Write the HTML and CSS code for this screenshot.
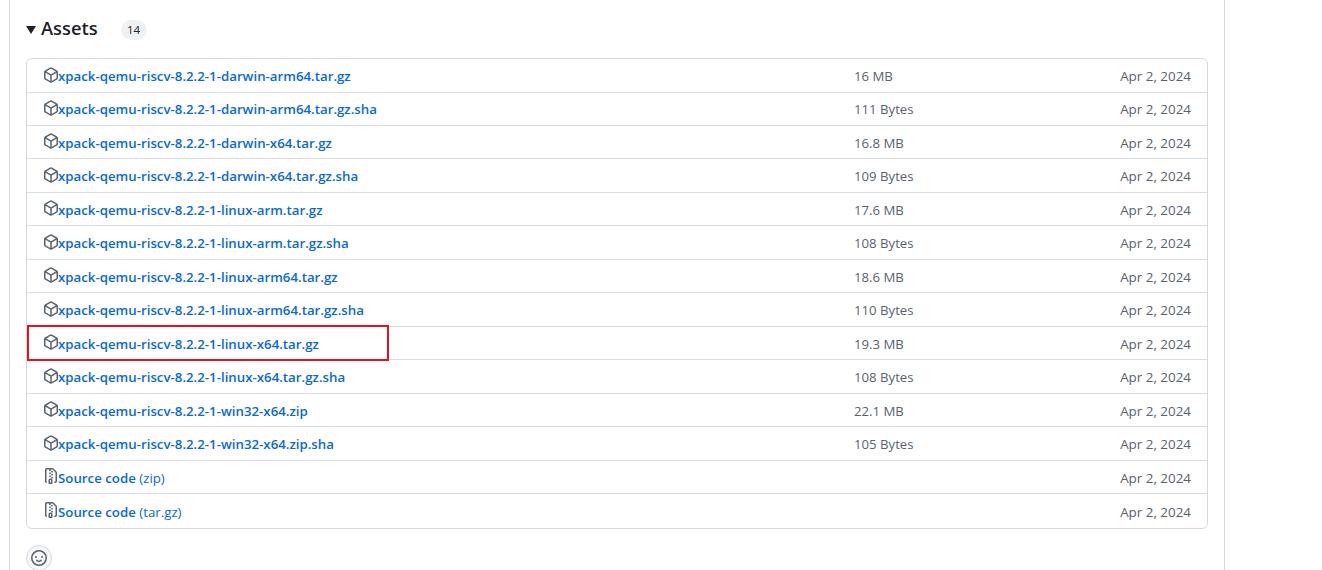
FILE: index.html
```html
<!DOCTYPE html>
<html lang="en">
<head>
<meta charset="utf-8">
<title>Assets</title>
<link rel="stylesheet" href="styles.css">
</head>
<body>
<main class="release">
  <div class="assets-head">
    <span class="caret"></span>
    <h3 class="assets-title">Assets</h3>
    <span class="counter">14</span>
  </div>
  <ul class="assets">
    <li class="row"><span class="name"><svg class="icon" viewBox="0 0 16 16"><use href="#pkg"/></svg><a>xpack-qemu-riscv-8.2.2-1-darwin-arm64.tar.gz</a></span><span class="size">16 MB</span><span class="date">Apr 2, 2024</span></li>
    <li class="row"><span class="name"><svg class="icon" viewBox="0 0 16 16"><use href="#pkg"/></svg><a>xpack-qemu-riscv-8.2.2-1-darwin-arm64.tar.gz.sha</a></span><span class="size">111 Bytes</span><span class="date">Apr 2, 2024</span></li>
    <li class="row"><span class="name"><svg class="icon" viewBox="0 0 16 16"><use href="#pkg"/></svg><a>xpack-qemu-riscv-8.2.2-1-darwin-x64.tar.gz</a></span><span class="size">16.8 MB</span><span class="date">Apr 2, 2024</span></li>
    <li class="row"><span class="name"><svg class="icon" viewBox="0 0 16 16"><use href="#pkg"/></svg><a>xpack-qemu-riscv-8.2.2-1-darwin-x64.tar.gz.sha</a></span><span class="size">109 Bytes</span><span class="date">Apr 2, 2024</span></li>
    <li class="row"><span class="name"><svg class="icon" viewBox="0 0 16 16"><use href="#pkg"/></svg><a>xpack-qemu-riscv-8.2.2-1-linux-arm.tar.gz</a></span><span class="size">17.6 MB</span><span class="date">Apr 2, 2024</span></li>
    <li class="row"><span class="name"><svg class="icon" viewBox="0 0 16 16"><use href="#pkg"/></svg><a>xpack-qemu-riscv-8.2.2-1-linux-arm.tar.gz.sha</a></span><span class="size">108 Bytes</span><span class="date">Apr 2, 2024</span></li>
    <li class="row"><span class="name"><svg class="icon" viewBox="0 0 16 16"><use href="#pkg"/></svg><a>xpack-qemu-riscv-8.2.2-1-linux-arm64.tar.gz</a></span><span class="size">18.6 MB</span><span class="date">Apr 2, 2024</span></li>
    <li class="row"><span class="name"><svg class="icon" viewBox="0 0 16 16"><use href="#pkg"/></svg><a>xpack-qemu-riscv-8.2.2-1-linux-arm64.tar.gz.sha</a></span><span class="size">110 Bytes</span><span class="date">Apr 2, 2024</span></li>
    <li class="row"><span class="highlight"></span><span class="name"><svg class="icon" viewBox="0 0 16 16"><use href="#pkg"/></svg><a>xpack-qemu-riscv-8.2.2-1-linux-x64.tar.gz</a></span><span class="size">19.3 MB</span><span class="date">Apr 2, 2024</span></li>
    <li class="row"><span class="name"><svg class="icon" viewBox="0 0 16 16"><use href="#pkg"/></svg><a>xpack-qemu-riscv-8.2.2-1-linux-x64.tar.gz.sha</a></span><span class="size">108 Bytes</span><span class="date">Apr 2, 2024</span></li>
    <li class="row"><span class="name"><svg class="icon" viewBox="0 0 16 16"><use href="#pkg"/></svg><a>xpack-qemu-riscv-8.2.2-1-win32-x64.zip</a></span><span class="size">22.1 MB</span><span class="date">Apr 2, 2024</span></li>
    <li class="row"><span class="name"><svg class="icon" viewBox="0 0 16 16"><use href="#pkg"/></svg><a>xpack-qemu-riscv-8.2.2-1-win32-x64.zip.sha</a></span><span class="size">105 Bytes</span><span class="date">Apr 2, 2024</span></li>
    <li class="row"><span class="name"><svg class="icon" viewBox="0 0 16 16"><use href="#zip"/></svg><a>Source code <span class="ext">(zip)</span></a></span><span class="size"></span><span class="date">Apr 2, 2024</span></li>
    <li class="row"><span class="name"><svg class="icon" viewBox="0 0 16 16"><use href="#zip"/></svg><a>Source code <span class="ext">(tar.gz)</span></a></span><span class="size"></span><span class="date">Apr 2, 2024</span></li>
  </ul>
  <button class="reaction" type="button" aria-label="Add reaction"><svg class="smiley" viewBox="0 0 16 16"><path d="M8 0a8 8 0 1 1 0 16A8 8 0 0 1 8 0ZM1.5 8a6.5 6.5 0 1 0 13 0 6.5 6.5 0 0 0-13 0Zm3.82 1.636a.75.75 0 0 1 1.038.175l.007.009c.103.118.22.222.35.31.264.178.683.37 1.285.37.602 0 1.02-.192 1.285-.371.13-.088.247-.192.35-.31l.007-.008a.75.75 0 0 1 1.222.87l-.022-.015c.02.013.021.015.021.015v.001l-.001.002-.002.003-.005.007-.014.019a2.066 2.066 0 0 1-.184.213c-.16.166-.338.316-.53.445-.63.418-1.37.638-2.127.629-.946 0-1.652-.308-2.126-.63a3.331 3.331 0 0 1-.715-.657l-.014-.02-.005-.006-.002-.003v-.002h-.001l.613-.432-.614.43a.75.75 0 0 1 .183-1.044ZM12 7a1 1 0 1 1-2 0 1 1 0 0 1 2 0ZM5 8a1 1 0 1 1 0-2 1 1 0 0 1 0 2Z"/></svg></button>
</main>
<svg class="defs" aria-hidden="true">
  <symbol id="pkg" viewBox="0 0 16 16"><path d="m8.878.392 5.25 3.045c.54.314.872.89.872 1.514v6.098a1.75 1.75 0 0 1-.872 1.514l-5.25 3.045a1.75 1.75 0 0 1-1.756 0l-5.25-3.045A1.75 1.75 0 0 1 1 11.049V4.951c0-.624.332-1.201.872-1.514L7.122.392a1.75 1.75 0 0 1 1.756 0ZM7.875 1.69l-4.63 2.685L8 7.133l4.755-2.758-4.63-2.685a.248.248 0 0 0-.25 0ZM2.5 5.677v5.372c0 .09.047.171.125.216l4.625 2.683V8.432Zm6.25 8.271 4.625-2.683a.25.25 0 0 0 .125-.216V5.677L8.75 8.432Z"/></symbol>
  <symbol id="zip" viewBox="0 0 16 16"><path d="M3.5 1.75v11.5c0 .09.048.173.126.217a.75.75 0 0 1-.752 1.298A1.748 1.748 0 0 1 2 13.25V1.75C2 .784 2.784 0 3.75 0h5.586c.464 0 .909.185 1.237.513l2.914 2.914c.329.328.513.773.513 1.237v8.586A1.75 1.75 0 0 1 12.25 15h-.5a.75.75 0 0 1 0-1.5h.5a.25.25 0 0 0 .25-.25V4.664a.25.25 0 0 0-.073-.177L9.513 1.573a.25.25 0 0 0-.177-.073H7.25a.75.75 0 0 1 0 1.5h-.5a.75.75 0 0 1 0-1.5h-3a.25.25 0 0 0-.25.25Zm3.75 8.75h.5c.966 0 1.75.784 1.75 1.75v3a.75.75 0 0 1-.75.75h-2.5a.75.75 0 0 1-.75-.75v-3c0-.966.784-1.75 1.75-1.75ZM6 5.25a.75.75 0 0 1 .75-.75h.5a.75.75 0 0 1 0 1.5h-.5A.75.75 0 0 1 6 5.25Zm.75 2.25h.5a.75.75 0 0 1 0 1.5h-.5a.75.75 0 0 1 0-1.5ZM8 6.75A.75.75 0 0 1 8.75 6h.5a.75.75 0 0 1 0 1.5h-.5A.75.75 0 0 1 8 6.75ZM8.75 3h.5a.75.75 0 0 1 0 1.5h-.5a.75.75 0 0 1 0-1.5ZM8 9.75A.75.75 0 0 1 8.75 9h.5a.75.75 0 0 1 0 1.5h-.5A.75.75 0 0 1 8 9.75Zm-1 2.5v2.25h1v-2.25a.25.25 0 0 0-.25-.25h-.5a.25.25 0 0 0-.25.25Z"/></symbol>
</svg>
</body>
</html>
```
FILE: styles.css
```css
* { box-sizing: border-box; }
html, body { margin: 0; height: 570px; overflow: hidden; background: #fff; }
body { font-family: "Open Sans", "Noto Sans", sans-serif; font-size: 13.4px; color: #1f2328; }

.defs { display: none; }

.release {
  width: 1216px;
  height: 570px;
  margin-left: 9px;
  padding: 17px 16px 0;
  border-left: 1px solid #d1d9e0;
  border-right: 1px solid #d1d9e0;
}

.assets-head { display: flex; align-items: center; height: 22px; }
.caret {
  width: 0; height: 0;
  margin-top: 3px;
  border-left: 5px solid transparent;
  border-right: 5px solid transparent;
  border-top: 8px solid #1f2328;
}
.assets-title { margin: 0 0 0 5px; font-size: 18.3px; font-weight: 600; line-height: 22px; }
.counter {
  margin-left: 23px;
  width: 26px; height: 20px;
  margin-top: 3px;
  border-radius: 10px;
  background: #eff2f5;
  color: #1f2328;
  font-size: 11.5px;
  line-height: 20px;
  text-align: center;
}

.assets {
  list-style: none;
  width: 1182px;
  margin: 19px 0 0;
  padding: 0;
  border: 1px solid #d1d9e0;
  border-radius: 6px;
}
.row {
  position: relative;
  display: grid;
  grid-template-columns: 811px 1fr auto;
  align-items: center;
  height: 33.47px;
  padding: 1.5px 16px 0 16px;
  border-top: 1px solid #d8dee4;
}
.row:first-child { border-top: 0; height: 32.5px; }
.row:last-child { height: 34.5px; }

.name { display: flex; align-items: center; }
.icon { width: 16px; height: 16px; margin-top: -3px; margin-right: -1px; fill: #59636e; flex: none; }
.name a { color: #0969da; font-weight: 600; font-size: 13.27px; }
.ext { font-weight: 400; }
.size, .date { color: #59636e; }
.size { font-size: 13.2px; }

.highlight {
  position: absolute;
  z-index: 1;
  left: 0; top: -1.5px;
  width: 362px; height: 36px;
  border: 2px solid #e5121c;
}

.reaction {
  display: flex;
  align-items: center;
  justify-content: center;
  width: 26px; height: 26px;
  margin-top: 16px;
  padding: 0;
  border: 1px solid #d1d9e0;
  border-radius: 50%;
  background: #f6f8fa;
}
.smiley { width: 16px; height: 16px; fill: #59636e; }
```
